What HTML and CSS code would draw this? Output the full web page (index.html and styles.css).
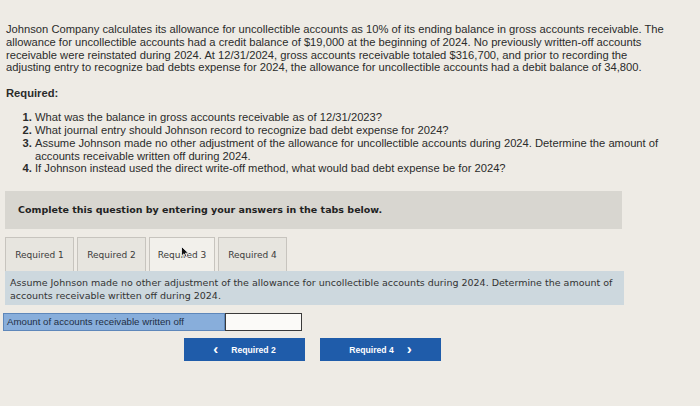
FILE: index.html
```html
<!DOCTYPE html>
<html>
<head>
<meta charset="utf-8">
<link rel="stylesheet" href="styles.css">
</head>
<body>
<div class="page">
  <p class="intro">Johnson Company calculates its allowance for uncollectible accounts as 10% of its ending balance in gross accounts receivable. The<br>allowance for uncollectible accounts had a credit balance of $19,000 at the beginning of 2024. No previously written-off accounts<br>receivable were reinstated during 2024. At 12/31/2024, gross accounts receivable totaled $316,700, and prior to recording the<br>adjusting entry to recognize bad debts expense for 2024, the allowance for uncollectible accounts had a debit balance of 34,800.</p>
  <p class="req-title">Required:</p>
  <ol class="req-list">
    <li>What was the balance in gross accounts receivable as of 12/31/2023?</li>
    <li>What journal entry should Johnson record to recognize bad debt expense for 2024?</li>
    <li>Assume Johnson made no other adjustment of the allowance for uncollectible accounts during 2024. Determine the amount of<br>accounts receivable written off during 2024.</li>
    <li>If Johnson instead used the direct write-off method, what would bad debt expense be for 2024?</li>
  </ol>
  <div class="complete-box">Complete this question by entering your answers in the tabs below.</div>
  <div class="tabs">
    <div class="tab">Required 1</div>
    <div class="tab">Required 2</div>
    <div class="tab active">Required 3
      <svg class="cursor" width="8" height="12" viewBox="0 0 8 12"><path d="M0.5 0.5 L0.5 10 L3 7.8 L4.6 11.3 L6 10.7 L4.4 7.2 L7.5 7.2 Z" fill="#111" stroke="#fff" stroke-width="0.8"/></svg>
    </div>
    <div class="tab">Required 4</div>
  </div>
  <div class="panel">Assume Johnson made no other adjustment of the allowance for uncollectible accounts during 2024. Determine the amount of<br>accounts receivable written off during 2024.</div>
  <div class="answer-row">
    <div class="answer-label">Amount of accounts receivable written off</div>
    <div class="answer-input"></div>
  </div>
  <div class="nav">
    <div class="btn"><span class="chev">&lsaquo;</span><span>Required 2</span></div>
    <div class="btn"><span>Required 4</span><span class="chev">&rsaquo;</span></div>
  </div>
</div>
</body>
</html>
```

FILE: styles.css
```css
html, body {
  margin: 0;
  padding: 0;
  background: #eeebe5;
}
.page {
  width: 700px;
  height: 406px;
  overflow: hidden;
  color: #2b2b2b;
  font-family: "Liberation Sans", Arial, sans-serif;
}
.intro {
  margin: 0;
  padding: 23px 0 0 6px;
  font-size: 11.2px;
  line-height: 12.8px;
  white-space: nowrap;
}
.req-title {
  margin: 0;
  padding: 13px 0 0 6px;
  font-size: 11.2px;
  font-weight: bold;
  line-height: 13px;
}
.req-list {
  margin: 0;
  padding: 11px 0 0 35px;
  font-size: 11.2px;
  line-height: 12.8px;
  white-space: nowrap;
}
.req-list li::marker {
  font-weight: bold;
}
.complete-box {
  margin: 16px 0 0 5px;
  width: 604px;
  height: 38px;
  padding-left: 13px;
  background: #d8d6d0;
  font-family: "DejaVu Sans", Verdana, sans-serif;
  font-weight: bold;
  font-size: 9.5px;
  line-height: 38px;
  color: #222;
}
.tabs {
  display: flex;
  gap: 3px;
  margin: 8px 0 0 5px;
  height: 34px;
}
.tab {
  position: relative;
  width: 67px;
  border: 1px solid #c7c4be;
  border-bottom: none;
  background: #e7e5df;
  font-family: "DejaVu Sans", Verdana, sans-serif;
  font-size: 9px;
  color: #3a3a3a;
  display: flex;
  align-items: center;
  justify-content: center;
}
.tab.active {
  background: #f2f0eb;
  width: 64px;
}
.cursor {
  position: absolute;
  left: 31px;
  top: 8px;
}
.panel {
  margin-left: 5px;
  width: 619px;
  height: 34px;
  padding: 5px 0 0 5px;
  box-sizing: border-box;
  background: #cdd8de;
  font-family: "DejaVu Sans", Verdana, sans-serif;
  font-size: 9.5px;
  line-height: 13px;
  color: #333;
  white-space: nowrap;
}
.answer-row {
  display: flex;
  margin: 8px 0 0 3px;
  height: 18px;
}
.answer-label {
  width: 217px;
  background: #88aedb;
  border: 1px solid #5e87ba;
  padding-left: 3px;
  font-size: 9.7px;
  line-height: 16px;
  color: #1f2f45;
  white-space: nowrap;
}
.answer-input {
  width: 75px;
  background: #fbfaf8;
  border: 1px solid #3a3a3a;
}
.nav {
  display: flex;
  gap: 15px;
  margin: 7px 0 0 184px;
}
.btn {
  width: 121px;
  height: 23px;
  background: #1f5caa;
  color: #fff;
  font-size: 8.6px;
  font-weight: bold;
  display: flex;
  align-items: center;
  justify-content: center;
  gap: 13px;
}
.btn .chev {
  font-size: 15px;
  line-height: 14px;
  margin-top: -2px;
}
```
